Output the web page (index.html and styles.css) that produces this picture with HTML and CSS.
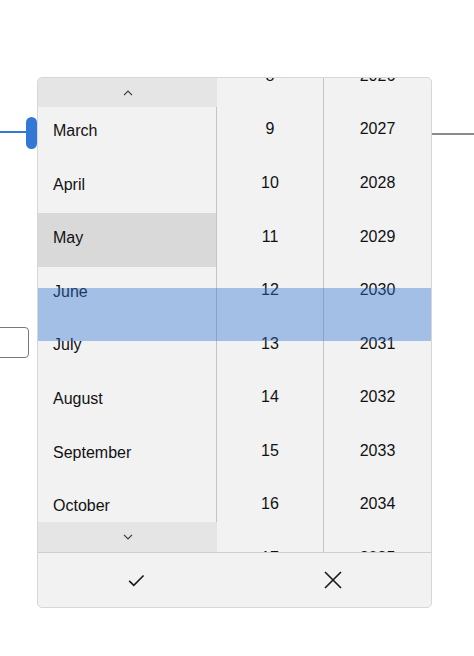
FILE: index.html
```html
<!DOCTYPE html>
<html lang="en">
<head>
<meta charset="utf-8">
<title>Date picker</title>
<link rel="stylesheet" href="styles.css">
</head>
<body>
<div class="page">
  <div class="slider">
    <div class="track-filled"></div>
    <div class="thumb"></div>
    <div class="track-rest"></div>
  </div>
  <div class="input-box"></div>

  <div class="picker">
    <div class="cols">
      <div class="col col-month">
        <ul class="list list-month">
          <li class="item">March</li>
          <li class="item">April</li>
          <li class="item item-hover">May</li>
          <li class="item">June</li>
          <li class="item">July</li>
          <li class="item">August</li>
          <li class="item">September</li>
          <li class="item">October</li>
        </ul>
        <div class="scroll-btn scroll-up">
          <svg width="10" height="6" viewBox="0 0 10 6"><path d="M1 5.2 L5 1.2 L9 5.2" fill="none" stroke="#3a3a3a" stroke-width="1.2"/></svg>
        </div>
        <div class="scroll-btn scroll-down">
          <svg width="10" height="6" viewBox="0 0 10 6"><path d="M1 0.8 L5 4.8 L9 0.8" fill="none" stroke="#3a3a3a" stroke-width="1.2"/></svg>
        </div>
      </div>
      <div class="col col-day">
        <ul class="list list-num">
          <li class="item">8</li>
          <li class="item">9</li>
          <li class="item">10</li>
          <li class="item">11</li>
          <li class="item">12</li>
          <li class="item">13</li>
          <li class="item">14</li>
          <li class="item">15</li>
          <li class="item">16</li>
          <li class="item">17</li>
        </ul>
      </div>
      <div class="col col-year">
        <ul class="list list-num">
          <li class="item">2026</li>
          <li class="item">2027</li>
          <li class="item">2028</li>
          <li class="item">2029</li>
          <li class="item">2030</li>
          <li class="item">2031</li>
          <li class="item">2032</li>
          <li class="item">2033</li>
          <li class="item">2034</li>
          <li class="item">2035</li>
        </ul>
      </div>
    </div>
    <div class="selection-band"></div>
    <div class="footer">
      <button class="action" type="button" aria-label="Confirm">
        <svg width="17" height="13" viewBox="0 0 17 13"><path d="M1.2 6.8 L5.8 11.3 L15.6 1.5" fill="none" stroke="#1c1c1c" stroke-width="1.7"/></svg>
      </button>
      <button class="action" type="button" aria-label="Cancel">
        <svg width="18" height="18" viewBox="0 0 18 18"><path d="M1 1 L17 17 M17 1 L1 17" fill="none" stroke="#1c1c1c" stroke-width="1.7"/></svg>
      </button>
    </div>
  </div>
</div>
</body>
</html>
```
FILE: styles.css
```css
* { box-sizing: border-box; }

html, body {
  margin: 0;
  padding: 0;
  background: #ffffff;
}

body {
  font-family: "Liberation Sans", Arial, sans-serif;
  color: #111113;
  overflow: hidden;
}

.page {
  position: relative;
  width: 474px;
  height: 656px;
  padding-top: 117px;
}

.slider {
  display: flex;
  align-items: center;
  height: 32px;
}

.track-filled {
  width: 26px;
  height: 2px;
  background: #3478d6;
  margin-top: -2px;
}

.thumb {
  width: 11px;
  height: 32px;
  border-radius: 6px;
  background: #3478d6;
}

.track-rest {
  flex: 1;
  height: 2px;
  background: #8c8c8c;
  margin-top: 2px;
}

.input-box {
  margin-top: 178px;
  margin-left: -100px;
  width: 129px;
  height: 31px;
  border: 1px solid #7a7a7a;
  border-radius: 4px;
  background: #ffffff;
}

.picker {
  position: absolute;
  left: 37px;
  top: 77px;
  width: 395px;
  height: 531px;
  background: #f2f2f2;
  border: 1px solid #d7d7d7;
  border-radius: 5px;
  overflow: hidden;
  display: flex;
  flex-direction: column;
}

.cols {
  display: flex;
  height: 475px;
  border-bottom: 1px solid #cfcfcf;
  flex: none;
}

.col {
  position: relative;
  height: 100%;
}

.col-month {
  width: 179px;
  border-right: 1px solid #c4c4c4;
}

.col-day {
  width: 107px;
  border-right: 1px solid #c4c4c4;
  overflow: hidden;
}

.col-year {
  flex: 1;
  overflow: hidden;
}

.list {
  list-style: none;
  margin: 0;
  padding: 0;
  font-size: 16px;
}

.item {
  height: 53.57px;
  display: flex;
  align-items: center;
  padding-bottom: 3px;
  line-height: 18px;
}

.list-month {
  margin-top: 27.9px;
}

.list-month .item {
  padding-left: 15px;
}

.item-hover {
  background: #d9d9d9;
}

.list-num {
  margin-top: -27.4px;
}

.list-num .item {
  justify-content: center;
}

.scroll-btn {
  position: absolute;
  left: 0;
  right: -1px;
  background: #e5e5e5;
  display: flex;
  align-items: center;
  justify-content: center;
}

.scroll-up {
  top: 0;
  height: 29px;
}

.scroll-down {
  bottom: 0;
  height: 30px;
}

.selection-band {
  position: absolute;
  left: 0;
  right: 0;
  top: 210px;
  height: 53px;
  background: rgba(45, 115, 210, 0.4);
  pointer-events: none;
}

.footer {
  display: flex;
  flex: 1;
}

.action {
  flex: 1;
  display: flex;
  align-items: center;
  justify-content: center;
  border: none;
  background: transparent;
  padding: 0;
  margin: 0;
}
```
